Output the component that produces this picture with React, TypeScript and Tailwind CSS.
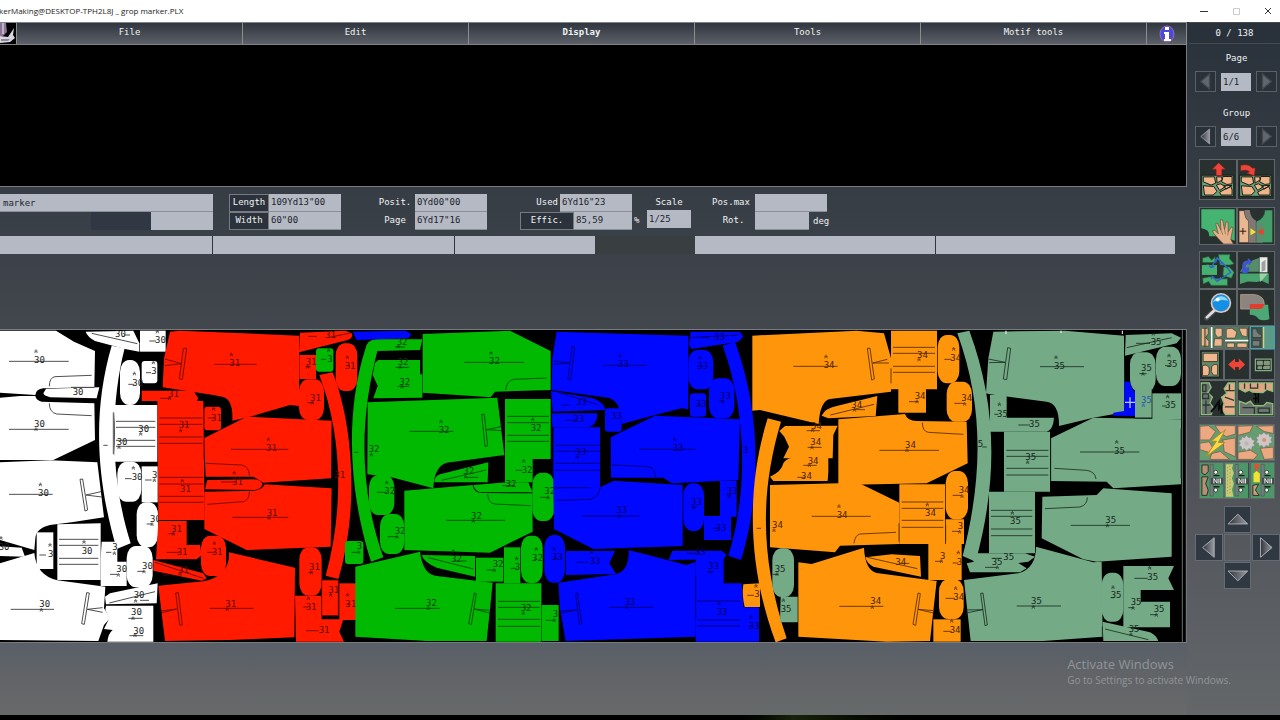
import React from 'react';

type Point = [number, number];
type Oval = [number, number, number, number];
type Label = [number, number, string?];

interface MarkerSize {
  size: string;
  offset: number;
  fill: string;
  ink: string;
  shapes: string[];
  ovals: Oval[];
  lines: string;
  labels: Label[];
  stars: Point[];
}

const stripes = (x1: number, x2: number, ys: number[]) => ys.map((y) => `M${x1} ${y}H${x2}`).join('');

// Coordinates are in thirds of a screen pixel, each size has its own origin
const sizes: MarkerSize[] = [
  {
    size: '30',
    offset: 0,
    fill: '#ffffff',
    ink: '#222222',
    shapes: [
      'M0 17H168L222 50L285 78L283 187L130 190Q108 192 106 210L0 203Z',
      'M138 191L298 187L290 220L150 217Q132 212 130 205Z',
      'M0 218L60 213H106Q108 226 125 230L283 235L285 345L160 405H0Z',
      'M0 412L150 406L292 412L312 577L215 592L150 600Q108 610 106 640L103 675L0 645Z',
      'M0 664L65 668L75 695L0 693Z',
      'M110 622H160V732H110Z',
      'M172 598L302 595V765H172Z',
      'M0 715L103 684Q108 750 172 766L316 785L312 850L330 880L312 900L295 948L0 945Z',
      'M335 62L374 70C330 240 330 460 392 655L350 672C285 450 280 250 335 62Z',
      'M257 20L400 17L418 55V80L375 72L285 48Q262 35 257 20Z',
      'M420 17H497V80H420Z',
      'M345 240H472V410H345Z',
      'M425 424H473V532H425Z',
      'M305 650H352V710H380V783H302V700Z',
      'M315 815L330 805L473 775L470 835L318 838Z',
      'M318 842H460V950H322Q325 925 338 915L312 912L328 880L316 855Z',
    ],
    ovals: [[360, 105, 420, 240], [425, 108, 472, 175], [352, 410, 424, 530], [410, 532, 474, 667], [380, 663, 458, 787]],
    lines:
      'M27 109H206M27 313H206M27 508H158M32 853H162M148 184Q148 158 165 155L275 151M148 235Q148 262 170 267L275 272M213 187H283' +
      'M340 262V388M310 361H323M240 463L248 462L263 555L255 558ZM258 510L303 500M258 510L305 516M260 803L268 804L253 898L245 896Z' +
      'M262 853L308 848M262 853L308 862M275 25L412 56M328 834L465 800M118 690H138M385 178H403M438 143H453M448 48H468M375 461H395M435 465H455' +
      'M440 597H456M318 682H334M330 748H352M412 739H432M385 880H428M388 932H430M420 826H447M372 30H390' +
      stripes(348, 466, [289, 307, 346, 364]) + stripes(177, 295, [643, 661, 700, 718]),
    labels: [[102, 114], [218, 210], [102, 306], [114, 514], [118, 846], [345, 36], [465, 54], [397, 183], [454, 147, '3'], [415, 321], [350, 360], [395, 465], [456, 460, '3'], [450, 590], [-4, 675], [144, 697, '3'], [245, 686], [337, 675, '3'], [349, 742], [426, 732], [401, 819], [393, 871], [400, 926]],
    stars: [[108, 79], [108, 313], [121, 479], [124, 855], [403, 146], [460, 113], [422, 327], [357, 367], [400, 429], [463, 466], [456, 598], [150, 660], [252, 651], [343, 685], [355, 750], [432, 740], [407, 828], [399, 880], [405, 931], [3, 639], [472, 20]],
  },
  {
    size: '31',
    offset: 0,
    fill: '#ff1a00',
    ink: '#5c0a00',
    shapes: [
      'M510 20L540 17L897 32V243L870 240L750 275L697 287Q700 225 670 216L640 210L488 187L492 100Z',
      'M900 23L1035 17Q1057 22 1057 30Q1056 42 1040 46L897 82Z',
      'M898 90H948V162H898Z',
      'M958 150L998 142C1060 300 1078 550 1015 762L977 752C1030 560 1030 340 958 150Z',
      'M425 197L580 197L595 220L590 228H425Z',
      'M472 228H610L614 585H475Z',
      'M612 340L740 275L995 287L993 460L790 473L760 455H617Z',
      'M622 465L760 463Q785 464 787 478Q785 492 765 495L615 493Z',
      'M613 500L765 497Q790 492 794 478L995 490L992 665L740 675L613 612Z',
      'M475 588H560V660H600L605 690L590 703H468Z',
      'M460 705L610 745L620 760L605 767L460 737Z',
      'M475 782L617 768Q690 750 687 682L885 728L883 937L690 945L495 948Z',
      'M965 765H1015V872H965Z',
      'M885 812H965V883H1030L1018 920L1032 950H888Z',
      'M1018 775H1068V885H1018Z',
    ],
    ovals: [[1007, 55, 1072, 198], [897, 163, 972, 285], [613, 245, 663, 316], [603, 632, 678, 753], [898, 667, 965, 812]],
    lines:
      'M550 70L560 70L547 163L538 162ZM495 102L543 116L495 122M642 118H770M693 373H865M697 577H865M630 850H760M527 804L535 803L547 900L539 900ZM483 858L530 852L483 864' +
      'M617 415L725 420Q748 425 748 452M622 538L730 530Q748 525 748 500M663 471H710M925 34H950M985 38L1050 24M480 220H510M917 125H932M922 233H942M1038 122H1050M623 279H645' +
      'M612 340V403M505 626H525M500 682H540M622 682H645M465 712L610 760M488 750H508M925 742H940M910 846H925M918 917H955M1040 838H1050M965 765H1015V872H965Z' +
      stripes(478, 607, [279, 298, 336, 355]) + stripes(478, 610, [457, 477, 514, 532]),
    labels: [[688, 123], [798, 378], [800, 573], [676, 845], [975, 38], [917, 121], [1034, 131], [930, 227], [504, 216], [633, 288], [536, 310], [540, 501], [696, 479], [513, 620], [530, 690], [635, 690], [534, 745], [927, 734], [985, 803], [917, 855], [956, 923], [1036, 847], [1003, 459]],
    stars: [[694, 89], [805, 343], [807, 580], [682, 853], [923, 126], [1042, 97], [937, 234], [641, 252], [542, 317], [547, 467], [703, 444], [643, 655], [520, 627], [934, 743], [992, 810], [925, 820], [1043, 810], [509, 220], [540, 748]],
  },
  {
    size: '32',
    offset: 1020,
    fill: '#00b900',
    ink: '#003c00',
    shapes: [
      'M75 75Q80 43 110 43H247L240 75L112 78C65 260 50 470 130 697L93 710C20 480 20 250 75 75Z',
      'M105 113L115 105H240V148H247V218L100 220L113 182L98 150Z',
      'M248 27L510 17L632 78V195L465 200L452 217L385 212L248 203Z',
      'M83 232L472 218L493 390L320 413Q282 425 280 490L155 457L82 448Z',
      'M495 222H632V402H578V472H495Z',
      'M283 472Q282 455 300 448L445 412L443 472Z',
      'M400 480L500 472H565L578 502H420Q402 495 400 480Z',
      'M193 497L398 480Q400 502 425 504L577 505L578 620L450 683L193 675Z',
      'M46 725L240 680Q248 745 285 752L458 773L440 948H260L46 935Z',
      'M245 690L405 693V755L290 728Q252 712 245 690Z',
      'M408 698H490V770H408Z',
      'M492 667H541V775H492Z',
      'M467 775H604V950H467Z',
      'M605 840H656V948H605Z',
    ],
    ovals: [[-72, 70, -20, 140], [87, 450, 163, 570], [120, 567, 193, 687], [577, 443, 643, 588], [543, 632, 608, 774], [15, 648, 70, 717]],
    lines:
      'M373 112H552M208 319H340M318 586H495M165 850H300M497 195Q500 168 520 163L620 159M443 508Q445 535 465 537L572 542M425 268L433 268L443 362L435 364Z' +
      'M440 314L483 305M440 314L485 317M403 804L409 806L394 899L386 896ZM402 852L448 856M402 852L448 864M305 466L438 435M265 698L400 732M165 66H195M167 127H208M172 184H208M110 502H140' +
      'M143 635H172M527 436H547M600 517H627M582 703H592M512 730H530M440 735H462M487 482H525M340 708H380M380 457H415M43 382H55M617 886H640M35 682H52M-57 103H-42' +
      stripes(502, 627, [274, 293, 331, 349]) + stripes(474, 599, [829, 847, 883, 904]),
    labels: [[447, 117], [296, 324], [393, 581], [258, 842], [86, 381], [170, 60], [173, 120], [178, 180], [133, 507], [164, 627], [545, 443], [572, 318], [370, 448], [497, 487], [613, 508], [576, 709], [524, 736, '3'], [458, 727], [333, 712], [542, 858], [638, 876, '3'], [50, 671, '3'], [-38, 111, '3']],
    stars: [[453, 84], [303, 290], [400, 588], [265, 850], [94, 389], [175, 65], [181, 127], [186, 185], [140, 473], [171, 636], [551, 408], [578, 284], [377, 456], [624, 518], [589, 672], [530, 701], [463, 736], [340, 679], [550, 865], [643, 886], [56, 682], [-34, 76]],
  },
  {
    size: '33',
    offset: 1620,
    fill: '#0008ff',
    ink: '#000060',
    shapes: [
      'M-562 20L-405 17Q-388 22 -387 30L-395 40L-550 45Z',
      'M50 20L445 32V253L425 250L345 270L245 297Q245 230 205 218L35 195L37 100Z',
      'M452 20L600 20L610 35L595 50L455 72L447 60Z',
      'M548 62L585 50C660 250 668 500 603 705L565 692C625 500 620 260 548 62Z',
      'M33 198L160 220Q195 235 195 255L38 260Z',
      'M35 265H172Q172 300 145 307H37Z',
      'M40 307H180V490H40Z',
      'M212 337L345 272L600 283L595 465L395 475L370 458H213Z',
      'M40 490L180 487L222 467L428 480V663L160 672L42 612Z',
      'M540 467H590V575H573V645H492V573H540Z',
      'M78 678H225L208 715L228 747L78 750Z',
      'M55 773L230 747Q268 735 266 675L440 720L467 710V935L77 948L60 850Z',
      'M397 677H545L560 690L550 703L386 705Z',
      'M467 700H551V775H605L610 847H657V950H467Z',
    ],
    ovals: [[445, 75, 520, 193], [507, 160, 583, 280], [450, 205, 498, 275], [195, 250, 245, 320], [430, 475, 492, 618], [13, 630, 75, 773]],
    lines:
      'M190 121H320M298 373H467M125 573H298M208 847H340M96 64L104 66L92 165L84 163ZM42 108L88 114L42 118M107 806L113 804L125 898L118 898ZM62 858L110 855L65 864' +
      'M217 420L325 425Q346 430 346 455M50 526L150 523Q178 515 180 488M50 200L175 240M65 240H88M75 286H110M445 38L595 30M485 38H505M473 123H490M470 240H485M536 228H552M45 488H148' +
      'M110 712H145M455 545H470M560 510H575M520 610H540M40 700H55M440 685H480M500 740H520M625 905H640M467 755V880' +
      stripes(47, 178, [361, 379, 415, 436]) + stripes(472, 600, [828, 885, 903]),
    labels: [[234, 126], [398, 378], [229, 564], [254, 840], [108, 241], [100, 290], [213, 283], [106, 389], [522, 45], [472, 132], [540, 223], [467, 247], [609, 383, '3'], [453, 541], [560, 507], [527, 617], [36, 704], [149, 717], [465, 690], [505, 733], [530, 870], [626, 912]],
    stars: [[240, 92], [404, 344], [238, 574], [261, 848], [480, 98], [548, 230], [112, 396], [461, 548], [568, 515], [42, 672], [155, 682], [511, 741], [537, 835], [633, 877]],
  },
  {
    size: '34',
    offset: 2220,
    fill: '#ff950a',
    ink: '#4a2400',
    shapes: [
      'M10 778L60 775V846H14Q5 810 10 778Z',
      'M37 32L350 17L432 25L453 100V200L270 222Q240 228 236 297L60 255L37 257Z',
      'M453 17H591V193H558V263H475V193H453Z',
      'M245 272Q255 250 290 243L412 213L407 273L265 280Z',
      'M295 283L495 267Q502 288 530 288L680 290L683 415L560 475L295 480Z',
      'M118 318L135 303L293 302L280 330L278 400H265V440L263 468H100L90 455Q125 440 130 415Q140 400 155 400H130L147 365L133 335Z',
      'M83 280L123 290C60 500 60 700 140 940L107 952C20 720 20 480 83 280Z',
      'M90 480L355 473L478 533V657L300 662L285 682L90 667Z',
      'M478 478H615V657H478Z',
      'M617 583H672V657H665V765H565V657H617Z',
      'M175 712L215 717L372 668Q375 735 410 744L590 768L570 948L440 950L175 935Z',
      'M376 697L455 688L540 693L543 755L400 725Q380 715 376 697Z',
      'M580 883H662V950H580Z',
    ],
    ovals: [[593, 30, 658, 175], [620, 170, 696, 290], [617, 438, 684, 583], [597, 763, 671, 882]],
    lines:
      'M160 124H293M418 376H597M215 574H392M298 844H430M382 70L390 70L403 162L395 165ZM398 114L442 103M398 114L447 114M534 804L541 806L527 901L519 898ZM534 853L580 857M534 853L580 864' +
      'M547 293Q548 320 565 322L670 328M342 655Q345 630 360 627L468 622M271 270L402 238M382 697L532 731M343 254H375M200 317H240M203 367H245M190 421H230M172 457H195M613 103H635M507 230H535' +
      'M643 235H672M638 511H665M636 619H658M585 709H605M638 714H655M617 820H645M610 919H635M50 610H63M22 811H42M478 715H508M453 130V175M477 595V650M617 600V650' +
      stripes(459, 585, [67, 85, 124, 142]) + stripes(485, 610, [531, 550, 586, 607]),
    labels: [[251, 129], [495, 370], [290, 579], [391, 837], [334, 249], [531, 98], [631, 108], [524, 221], [664, 228], [213, 311], [211, 361], [203, 416], [183, 462], [96, 610], [555, 574], [656, 505], [653, 612, '3'], [600, 703, '3'], [650, 720, '3'], [466, 719], [640, 826], [629, 925], [43, 817, '3']],
    stars: [[258, 95], [501, 376], [297, 544], [397, 847], [343, 255], [537, 104], [641, 72], [531, 230], [674, 237], [218, 316], [216, 368], [208, 421], [102, 616], [562, 539], [666, 514], [659, 621], [604, 709], [655, 683], [647, 790], [635, 888], [48, 783]],
  },
  {
    size: '35',
    offset: 2850,
    fill: '#74aa86',
    ink: '#16281c',
    shapes: [
      'M22 25L58 17C140 240 145 460 77 710L38 693C100 450 100 240 22 25Z',
      'M-508 815H-457V892H-510Z',
      'M130 20L345 17L522 32L523 262L430 278L327 303Q328 235 290 230L120 208L108 205L115 100Z',
      'M120 210H170V278H312Q310 315 290 320H120Z',
      'M162 320H300V500H162Z',
      'M117 500H255V685H117Z',
      'M303 340L430 278L693 283V478L490 490L470 470L303 468Z',
      'M277 515L440 510L460 490L665 505V695L440 710L400 703L275 640Z',
      'M42 765L205 745Q258 730 258 665L430 712L455 710L458 935L280 948H62Z',
      'M50 685H225L255 695L235 710L205 714L230 730L210 742H60L50 715L72 710Z',
      'M527 30L665 25L693 38L680 55L525 92Z',
      'M555 195H605V278H555Z',
      'M607 205H693V282H607Z',
      'M520 723H672L655 760L672 795H572V830H660V907H520Z',
      'M458 890L600 922Q620 932 625 948H460Z',
    ],
    ovals: [[540, 82, 617, 200], [618, 65, 693, 183], [455, 743, 520, 890], [-533, 670, -468, 816]],
    lines:
      'M270 125H402M390 381H568M362 601H540M200 843H333M173 68L182 70L170 164L160 162ZM115 102L165 112L117 113M92 805L99 804L112 900L105 902ZM48 855L98 854M48 864L98 854' +
      'M313 430L410 436Q436 440 438 462M285 551L390 546Q412 540 412 517M530 68L665 38M558 55H600M465 912L595 944M97 366H110M205 300H240M133 268H145M125 700H155M105 727H140M568 146H590' +
      'M645 122H660M636 243H650M553 760H593M535 848H550M600 869H620M482 818H492M555 280H605M-532 748H-515M302 340V468M693 310V460M457 905V935' +
      stripes(169, 295, [376, 394, 430, 450]) + stripes(123, 247, [556, 574, 612, 632]),
    labels: [[312, 131], [492, 386], [466, 595], [243, 836], [83, 366, '5'], [237, 305], [141, 275], [226, 405], [180, 598], [160, 706], [125, 721], [602, 60], [573, 138], [650, 126], [645, 249], [592, 764], [542, 840], [611, 861], [482, 819], [536, 920], [-526, 740], [-508, 860]],
    stars: [[318, 97], [500, 351], [472, 602], [250, 846], [148, 238], [233, 412], [187, 564], [579, 147], [657, 92], [653, 215], [599, 729], [549, 849], [619, 870], [489, 787], [543, 928], [142, 728], [610, 27], [-519, 748], [-500, 826]],
  },
];

const starPath = ([x, y]: Point) => `M${x} ${y - 6}V${y - 2}M${x - 5} ${y - 1}H${x + 5}M${x - 4} ${y + 5}L${x - 1} ${y}M${x + 4} ${y + 5}L${x + 1} ${y}`;

const Marker: React.FC = () => (
  <svg viewBox="0 15 3561 936" className="block w-full bg-black" role="img" aria-label="Marker layout">
    {sizes.map((s) => (
      <g key={s.size} transform={`translate(${s.offset} 0)`}>
        <g fill={s.fill}>
          {s.shapes.map((d) => (
            <path key={d} d={d} />
          ))}
          {s.ovals.map(([x1, y1, x2, y2]) => (
            <rect key={`${x1}-${y1}`} x={x1} y={y1} width={x2 - x1} height={y2 - y1} rx={y2 - y1 < 80 ? 9 : 27} ry={y2 - y1 < 80 ? 9 : 36} />
          ))}
        </g>
        <path d={s.lines} fill="none" stroke={s.ink} strokeWidth="2.4" />
        <path d={s.stars.map(starPath).join('')} fill="none" stroke={s.ink} strokeWidth="2" />
        <g fill={s.ink} fontSize="27" fontFamily="'DejaVu Sans Mono', monospace">
          {s.labels.map(([x, y, text]) => (
            <text key={`${x}-${y}`} x={x} y={y}>
              {text ?? s.size}
            </text>
          ))}
        </g>
      </g>
    ))}
    <g transform="translate(2850 0)">
      <path d="M523 170H540Q545 195 555 200V273L490 272V263L523 258Z" fill="#0008ff" />
      <text x="573" y="234" fill="#1f56b0" fontSize="27" fontFamily="'DejaVu Sans Mono', monospace">35</text>
      <path d={starPath([580, 241])} stroke="#1f56b0" strokeWidth="2" />
      <path d="M525 232H555M540 217V249" stroke="#b9c6ee" strokeWidth="4" />
      <path d="M168 17V27M333 17V24M517 17V27" stroke="#fff" strokeWidth="3" />
      <path d="M697 15V951" stroke="#66706a" strokeWidth="3" />
      <path d="M709 15V951" stroke="#8a8d90" strokeWidth="3" />
    </g>
  </svg>
);

const menus = ['File', 'Edit', 'Display', 'Tools', 'Motif tools'];

const MenuBar: React.FC = () => (
  <nav className="flex h-[23px] border-y border-[#808285] bg-linear-to-b from-[#30363f] to-[#5d6068]">
    <svg viewBox="0 0 16 21" className="h-full w-4 shrink-0 bg-black" aria-hidden="true">
      <path d="M0 0H6L7 9L3 13H0Z" fill="#8b7596" />
      <path d="M2 0H4V11H2Z" fill="#c3b3ca" />
      <path d="M0 13L8 14L14 5L13 12L15 15L10 19L0 20Z" fill="#d8d5de" />
      <path d="M1 16H10L8 18H1Z" fill="#8d8799" />
    </svg>
    {menus.map((name) => (
      <button
        key={name}
        type="button"
        className={`flex-1 border-l border-[#8c8e8c] pb-0.5 text-center ${name === 'Display' ? 'font-bold' : ''}`}
      >
        {name}
      </button>
    ))}
    <button type="button" aria-label="Information" className="flex w-[41px] items-center justify-center border-x border-[#8c8e8c]">
      <svg viewBox="0 0 18 18" className="size-[18px]">
        <ellipse cx="9" cy="9" rx="7" ry="8" fill="#4a49d8" stroke="#9a6ab8" />
        <path d="M7 2H11V5H7ZM6 7H11V14H13V16H6V14H7V9H6Z" fill="#fff" />
      </svg>
    </button>
  </nav>
);

interface FieldProps {
  id: string;
  label: string;
  value?: string;
  labelClass?: string;
  inputClass?: string;
}

const Field: React.FC<FieldProps> = ({ id, label, value = '', labelClass = '', inputClass = 'w-[72px]' }) => (
  <div className="flex h-[18px] justify-end">
    <label htmlFor={id} className={`flex items-center ${labelClass}`}>
      {label}
    </label>
    <input id={id} defaultValue={value} className={`border-b border-[#8b9098] bg-[#b5b9c4] px-0.5 text-[#20252c] ${inputClass}`} />
  </div>
);

const InfoPanel: React.FC = () => (
  <section className="h-[142px] pt-[7px]">
    <div className="flex">
      <div className="w-[213px]">
        <input aria-label="Marker name" defaultValue="marker" className="block h-[18px] w-full border-b border-[#8b9098] bg-[#b5b9c4] px-[3px] text-[#20252c]" />
        <div className="flex h-[18px] justify-end">
          <div className="w-[60px] bg-[#2f3843]" />
          <input aria-label="Variant" className="w-[62px] bg-[#b5b9c4] px-0.5" />
        </div>
      </div>
      <div className="ml-4">
        <Field id="length" label="Length" value={'109Yd13"00'} labelClass="w-10 justify-center border border-[#767b80] bg-[#2b323b]" />
        <Field id="width" label="Width" value={'60"00'} labelClass="w-10 justify-center border border-[#767b80] bg-[#2b323b]" />
      </div>
      <div className="ml-[34px]">
        <Field id="posit" label="Posit." value={'0Yd00"00'} labelClass="w-10 justify-center" />
        <Field id="page-length" label="Page" value={'6Yd17"16'} labelClass="w-10 justify-center" />
      </div>
      <div className="ml-[33px]">
        <Field id="used" label="Used" value={'6Yd16"23'} labelClass="pr-0.5" />
        <Field id="effic" label="Effic." value="85,59" labelClass="w-[54px] justify-center border border-[#767b80] bg-[#2b323b]" inputClass="w-[58px]" />
      </div>
      <span className="mt-5 ml-0.5 w-[13px]">%</span>
      <div className="w-11">
        <label htmlFor="scale" className="block h-4 text-center leading-4">Scale</label>
        <input id="scale" defaultValue="1/25" className="block h-[18px] w-full bg-[#b5b9c4] px-0.5 text-[#20252c]" />
      </div>
      <div className="ml-[21px] flex flex-col items-start">
        <Field id="pos-max" label="Pos.max" labelClass="w-[43px]" />
        <div className="flex">
          <Field id="rotation" label="Rot." labelClass="w-[43px] justify-center" inputClass="w-[54px]" />
          <span className="ml-1 leading-[18px]">deg</span>
        </div>
      </div>
    </div>
    <div className="mt-1.5 flex h-[18px] pr-3">
      <input aria-label="Message 1" className="min-w-0 flex-[213_1_0%] border-r border-[#30363d] bg-[#b5b9c4]" />
      <input aria-label="Message 2" className="min-w-0 flex-[241_1_0%] border-r border-[#30363d] bg-[#b5b9c4]" />
      <input aria-label="Message 3" className="min-w-0 flex-[141_1_0%] bg-[#b5b9c4]" />
      <div className="flex-[100_1_0%] bg-[#393e41]" />
      <input aria-label="Message 4" className="min-w-0 flex-[240_1_0%] border-r border-[#30363d] bg-[#b5b9c4]" />
      <input aria-label="Message 5" className="min-w-0 flex-[240_1_0%] bg-[#b5b9c4]" />
    </div>
  </section>
);

const arrows = {
  left: 'M20 3L7 14L20 25Z',
  right: 'M8 3L21 14L8 25Z',
  up: 'M14 8L25 19H3Z',
  down: 'M14 20L25 9H3Z',
};

const Arrow: React.FC<{ to: keyof typeof arrows; off?: boolean }> = ({ to, off }) => (
  <svg viewBox="0 0 28 28" className="size-full">
    <path d={arrows[to]} fill={off ? '#62666e' : 'url(#metal)'} stroke={off ? '#454a52' : '#b4b7bd'} strokeWidth={off ? 2 : 1} />
  </svg>
);

const Pager: React.FC<{ id: string; label: string; value: string; prevOff?: boolean }> = ({ id, label, value, prevOff }) => (
  <div className="mb-2.5">
    <label htmlFor={id} className="block h-[22px] pr-0.5 text-center leading-[22px]">{label}</label>
    <div className="mt-0.5 flex h-[21px] items-center gap-[5px]">
      <button type="button" aria-label={`Previous ${label}`} className="size-[21px] border border-[#596067] bg-[#2a3139]">
        <Arrow to="left" off={prevOff} />
      </button>
      <input id={id} defaultValue={value} className="h-[18px] w-[30px] bg-[#b5b9c4] px-0.5 text-[#20252c]" />
      <button type="button" aria-label={`Next ${label}`} className="size-[21px] border border-[#596067] bg-[#2a3139]">
        <Arrow to="right" off />
      </button>
    </div>
  </div>
);

interface ToolProps {
  label: string;
  viewBox: string;
  active?: boolean;
  children: React.ReactNode;
}

const Tool: React.FC<ToolProps> = ({ label, viewBox, active, children }) => (
  <button type="button" aria-label={label} className={`min-w-0 flex-1 overflow-hidden border bg-[#28312f] ${active ? 'border-[#38a7b5]' : 'border-[#5f6569]'}`}>
    <svg viewBox={viewBox} preserveAspectRatio="none" className="block size-full">
      {children}
    </svg>
  </button>
);

const Cuttings: React.FC = () => (
  <g stroke="#171c18" strokeWidth="3">
    <path d="M5 46H103V110H5Z" fill="#68a178" />
    <path d="M10 51H44L48 70L34 76L10 66ZM51 51H66L68 60L52 70ZM70 50H98V72L82 74L66 66ZM10 78L42 80L52 95L40 106H14ZM50 76L62 72L78 80L60 92ZM60 97L94 80L98 90V106H64ZM72 78L98 77L80 88Z" fill="#f0b488" />
  </g>
);

const Clamp: React.FC = () => (
  <g>
    <path d="M32 4H42V100H32Z" fill="#777d80" stroke="#2c3230" />
    <path d="M36 46H72V64H36Z" fill="#4b5152" stroke="#111" />
    <path d="M44 62V47L54 61V47M60 47V62M65 47V62" fill="none" stroke="#e8eae8" strokeWidth="3" />
    <circle cx="50" cy="28" r="6" fill="#f2f4f0" stroke="#111" strokeWidth="2" />
    <circle cx="50" cy="82" r="6" fill="#f2f4f0" stroke="#111" strokeWidth="2" />
    <path d="M43 38H62M43 72H62" stroke="#182018" strokeWidth="4" />
  </g>
);

const gear = 'M22 0L29 7L37 4L39 13L48 16L43 24L48 32L39 35L38 44L29 41L22 48L16 41L7 44L6 35L-2 32L3 24L-2 16L6 13L7 4L16 7Z';

const Toolbox: React.FC = () => (
  <div className="ml-1 w-[76px]">
    <div className="mb-[7px] flex h-[41px]">
      <Tool label="Remove pieces" viewBox="0 0 110 118">
        <Cuttings />
        <path d="M57 8L78 28H67V47H49V28H37Z" fill="#ea443b" stroke="#7c1f1c" strokeWidth="2" />
      </Tool>
      <Tool label="Move pieces" viewBox="0 0 110 118">
        <Cuttings />
        <path d="M8 16Q32 10 43 24L53 25L50 48L27 40L35 35Q26 28 8 33Z" fill="#ea443b" stroke="#7c1f1c" strokeWidth="2" />
      </Tool>
    </div>
    <div className="mb-1.5 flex h-[38px]">
      <Tool label="Grab piece" viewBox="0 0 110 110">
        <path d="M4 4H106V100L70 86H28Q30 66 4 62Z" fill="#45b471" />
        <path d="M62 100L42 78L38 70L45 68L56 79L48 48L53 46L64 68L62 36L69 36L75 66L80 42L86 43L86 73L96 58L101 60L94 96L102 110H72Z" fill="#e2b18b" stroke="#6b452f" strokeWidth="2" />
        <path d="M64 68L70 82M75 66L78 80M86 73L85 84" stroke="#8d6044" strokeWidth="2" />
      </Tool>
      <Tool label="Align piece" viewBox="0 0 110 110">
        <path d="M3 8H20Q20 32 33 40V106H3Z" fill="#eab890" stroke="#231d1a" strokeWidth="2" />
        <path d="M20 6H36Q38 30 56 40V106H33V40Q20 30 20 6Z" fill="#817874" />
        <path d="M56 40Q80 34 82 6H106V106H56Z" fill="#459e69" stroke="#20352a" strokeWidth="2" />
        <path d="M56 44H76V106H56Z" fill="#5f8c70" />
        <path d="M5 71H25M15 61V81" stroke="#2d1b16" strokeWidth="3" />
        <path d="M38 62L55 73L38 83Z" fill="#f0e432" />
        <path d="M78 62L58 73L78 83Z" fill="#e8412c" />
      </Tool>
    </div>
    <div className="flex h-[38px]">
      <Tool label="Rotate group" viewBox="0 0 110 110">
        <path d="M8 18L26 14L36 25L46 14V32H8ZM56 8H92L90 20L104 36L92 40H62ZM6 42L26 38L30 50L48 42V68H6ZM72 46H90L104 62L96 80L70 72ZM8 80L30 76L50 82L84 82V102H34L26 90L10 98Z" fill="#47b06f" stroke="#255f3d" strokeWidth="2" />
        <path d="M6 40H52V70H6Z" fill="#47b06f" />
        <path d="M34 48L52 18L72 36L94 62L52 90L38 74M34 48L28 42M34 48L44 44M52 18L48 32M72 36L60 34M94 62L84 50M52 90L64 78M38 74L34 84" fill="none" stroke="#3267c8" strokeWidth="4" />
      </Tool>
      <Tool label="Flip piece" viewBox="0 0 110 110">
        <path d="M6 60Q20 30 64 18V60Z" fill="#548d69" />
        <path d="M6 66H94V98L72 88L58 92L30 90L6 98Z" fill="#48a36c" />
        <path d="M66 16H90V62H66Z" fill="#e9ece9" />
        <path d="M72 32L84 24V56L72 60Z" fill="#9da39f" />
        <path d="M66 66H92L68 92Z" fill="#9bd0a8" />
        <path d="M14 54Q8 26 30 26L30 18L44 30L32 42V35Q22 36 24 48L34 46V56Q30 66 20 66L8 60Z" fill="#3e55cf" />
      </Tool>
    </div>
    <div className="flex h-[37px]">
      <Tool label="Zoom" viewBox="0 0 110 110">
        <path d="M48 60L20 88" stroke="#51545a" strokeWidth="15" strokeLinecap="round" />
        <path d="M46 62L21 86" stroke="#dfdce5" strokeWidth="8" strokeLinecap="round" />
        <circle cx="64" cy="41" r="29" fill="#1390e6" stroke="#e5c5b6" strokeWidth="5" />
        <path d="M40 38Q48 20 66 20Q80 22 86 34Q62 28 40 38Z" fill="#8bd8ff" />
        <circle cx="54" cy="30" r="6" fill="#fff" />
      </Tool>
      <Tool label="Overlap" viewBox="0 0 110 110">
        <path d="M8 14H50Q78 18 80 40V60H8Z" fill="#8b8582" stroke="#d8a78a" strokeWidth="2" />
        <path d="M36 46H92L96 92Q76 98 64 92Q54 78 36 78Z" fill="#4ca875" />
        <path d="M36 44H80Q80 56 68 60H36Z" fill="#e33c2e" />
      </Tool>
    </div>
    <div className="flex h-[23px]">
      <Tool label="Vertical split" viewBox="0 0 74 68">
        <path d="M0 0H74V68H0Z" fill="#527f5f" />
        <path d="M4 4H26V22L18 34L28 46V62H4ZM48 4H70V30L56 34L48 22ZM46 38H70V62H44ZM14 4H18V64H14Z" fill="#edb68f" stroke="#2f3329" strokeWidth="2" />
        <path d="M37 0V68" stroke="#fff" strokeWidth="5" />
      </Tool>
      <Tool label="Horizontal split" viewBox="0 0 74 68">
        <path d="M0 0H74V68H0Z" fill="#527f5f" />
        <path d="M4 6L22 4L38 16L32 36H4ZM44 4H70V32L54 28ZM6 52H30V66H6ZM38 52H70V66H38Z" fill="#edb68f" stroke="#2f3329" strokeWidth="2" />
        <path d="M0 44H74" stroke="#fff" strokeWidth="5" />
      </Tool>
      <Tool label="Lock zone" viewBox="0 0 74 68" active>
        <path d="M0 0H74V68H0Z" fill="#5b9a86" />
        <path d="M0 0H36V68H0Z" fill="#45504c" />
        <path d="M4 6H18Q18 22 34 26V34H4ZM4 44H28V62H4Z" fill="#747d78" stroke="#252d2a" strokeWidth="2" />
        <path d="M40 0V68" stroke="#d4cf70" strokeWidth="4" />
      </Tool>
    </div>
    <div className="flex h-[31px]">
      <Tool label="Show pieces" viewBox="0 0 74 90">
        <path d="M4 4H62V84H4Z" fill="#5a8c67" stroke="#17201a" strokeWidth="3" />
        <path d="M10 10H56V36H10ZM8 48Q28 42 30 62Q30 78 24 80H8ZM37 52Q43 42 56 46V78H42Q32 68 37 52Z" fill="#eeb78e" stroke="#4a392e" strokeWidth="3" />
      </Tool>
      <Tool label="Swap" viewBox="0 0 74 90">
        <path d="M10 45L32 26V37H44V26L64 45L44 64V53H32V64Z" fill="#ee4438" />
      </Tool>
      <Tool label="Fit marker" viewBox="0 0 74 90">
        <path d="M14 28H64V64H14Z" fill="#1e2722" stroke="#82ab88" strokeWidth="4" />
        <path d="M20 35H36V46H20ZM42 35H58V46H42ZM22 52H34V58H22ZM40 52L58 50V58H40Z" fill="#9a8d78" stroke="#80a989" strokeWidth="3" />
      </Tool>
    </div>
    <div className="mb-[7px] flex h-[37px]">
      <Tool label="Compact horizontally" viewBox="0 0 110 108">
        <path d="M4 6H28L34 20L24 36L38 50L30 68L42 84L34 104H4Z" fill="#6e7570" stroke="#8fbd7c" strokeWidth="4" />
        <path d="M106 6H86L74 24L82 38L66 50L74 70L66 84L78 104H106Z" fill="#e3ad87" stroke="#8fbd7c" strokeWidth="4" />
        <path d="M8 12H18V32H8ZM8 40H26V54H8ZM8 74H32M18 60V102M78 30H106M76 50L104 60M76 80H106M90 10V30" fill="none" stroke="#263a2d" strokeWidth="4" />
        <path d="M34 96L58 64V86L66 76V100" fill="none" stroke="#080a09" strokeWidth="6" />
      </Tool>
      <Tool label="Compact vertically" viewBox="0 0 110 108">
        <path d="M4 6H106V32L88 26L76 36L44 34L34 28L22 34L4 24Z" fill="#dba783" stroke="#8fbd7c" strokeWidth="4" />
        <path d="M4 104V62L24 70L38 62L48 76L78 76L88 66L106 70V104Z" fill="#6d756f" stroke="#8fbd7c" strokeWidth="4" />
        <path d="M20 8V24M38 8V22H60V8M84 8V26M14 82H50V102M62 84H96V98H62Z" fill="none" stroke="#25382c" strokeWidth="4" />
        <path d="M48 40H54V68M46 54H60M62 38V66" fill="none" stroke="#080a09" strokeWidth="5" />
      </Tool>
    </div>
    <div className="mb-px flex h-[37px]">
      <Tool label="Quick nesting" viewBox="0 0 110 108">
        <path d="M0 0H110V108H0Z" fill="#639d70" />
        <path d="M0 4L26 2L48 20L30 46H0ZM46 2H108V28L80 36L60 22ZM0 56L28 52L40 72L26 84L0 76ZM70 46L108 40V98L74 82ZM36 88L62 82L90 106H30Z" fill="#eca981" stroke="#71513e" strokeWidth="2" />
        <path d="M78 14L34 50H50L18 98L76 54H56Z" fill="#f6d94a" stroke="#b88624" strokeWidth="3" />
      </Tool>
      <Tool label="Nesting settings" viewBox="0 0 110 108">
        <path d="M0 0H110V108H0Z" fill="#639d70" />
        <path d="M0 4L46 2L36 22L0 32ZM56 4L108 2V26L80 20ZM0 84L38 78L60 92L48 106H0ZM68 72L108 68V104L80 106Z" fill="#eca981" stroke="#71513e" strokeWidth="2" />
        <path d={gear} transform="translate(4 32)" fill="#cbc7c7" stroke="#88817f" strokeWidth="2" />
        <path d={gear} transform="translate(57 22)" fill="#cbc7c7" stroke="#88817f" strokeWidth="2" />
        <circle cx="26" cy="57" r="7" fill="#bdb6b4" />
        <circle cx="80" cy="46" r="6" fill="#d98f6e" />
      </Tool>
    </div>
    <div className="mb-[7px] flex h-[37px]">
      <Tool label="Cut order" viewBox="0 0 74 106">
        <path d="M0 0H74V106H0Z" fill="#4c9668" />
        <path d="M6 6H26V26L16 36L6 30ZM6 42H26L18 62L26 82L22 98H6Z" fill="#b68f75" stroke="#2b2f27" strokeWidth="3" />
        <Clamp />
      </Tool>
      <Tool label="Fabric order" viewBox="0 0 74 106">
        <path d="M0 0H74V106H0Z" fill="#4c9668" />
        <path d="M3 4H26L22 16L28 30L22 46L28 62L22 80L27 102H3Z" fill="#c9ca76" />
        <path d="M8 12V94M16 8V98" stroke="#9ca052" strokeWidth="3" strokeDasharray="4 6" />
        <Clamp />
      </Tool>
      <Tool label="Paint order" viewBox="0 0 74 106">
        <path d="M0 0H74V106H0Z" fill="#4c9668" />
        <path d="M10 3H28L20 24L14 24Z" fill="#e0512f" />
        <path d="M8 32L18 24L28 32V58H8Z" fill="#f2e130" />
        <path d="M6 68L24 64L14 82L26 98H6Z" fill="#d69c79" stroke="#2b2f27" strokeWidth="3" />
        <Clamp />
      </Tool>
    </div>
  </div>
);

const Sidebar: React.FC = () => (
  <aside className="w-[93px] shrink-0">
    <div className="ml-0.5 h-[22px] border-y border-[#454b50] bg-[#29313b] text-center leading-5">0 / 138</div>
    <div className="pt-[3px] pl-2">
      <Pager id="page" label="Page" value="1/1" prevOff />
      <Pager id="group" label="Group" value="6/6" />
      <div className="h-0.5" />
      <Toolbox />
      <div className="grid w-[85px] grid-cols-3 gap-px">
        <button type="button" aria-label="Pan up" className="col-start-2 h-[27px] border border-[#646b75] bg-[#303842]"><Arrow to="up" /></button>
        <button type="button" aria-label="Pan left" className="col-start-1 h-[27px] border border-[#646b75] bg-[#303842]"><Arrow to="left" /></button>
        <div className="h-[27px] border border-[#646b75]" />
        <button type="button" aria-label="Pan right" className="h-[27px] border border-[#646b75] bg-[#303842]"><Arrow to="right" /></button>
        <button type="button" aria-label="Pan down" className="col-start-2 h-[27px] border border-[#646b75] bg-[#303842]"><Arrow to="down" /></button>
      </div>
    </div>
  </aside>
);

const TitleBar: React.FC = () => (
  <header className="flex h-[22px] items-center justify-between bg-white font-['Open_Sans',sans-serif] text-[8px] text-[#222]">
    <h1 className="-ml-px whitespace-nowrap">kerMaking@DESKTOP-TPH2L8J _ grop marker.PLX</h1>
    <div className="flex gap-5 pr-1.5">
      <button type="button" aria-label="Minimize">
        <svg viewBox="0 0 12 12" className="size-3"><path d="M2 6.5H10" stroke="#333" /></svg>
      </button>
      <button type="button" aria-label="Maximize">
        <svg viewBox="0 0 12 12" className="size-3"><path d="M3.5 3.5H9.5V9.5H3.5Z" fill="none" stroke="#ccc" /></svg>
      </button>
      <button type="button" aria-label="Close">
        <svg viewBox="0 0 12 12" className="size-3"><path d="M3 3L9 9M9 3L3 9" stroke="#333" /></svg>
      </button>
    </div>
  </header>
);

const App: React.FC = () => {
  return (
    <div className="relative flex min-h-screen flex-col overflow-hidden bg-black font-['DejaVu_Sans_Mono',monospace] text-[9px] text-[#f0f2f4]">
      <svg className="absolute size-0" aria-hidden="true">
        <linearGradient id="metal">
          <stop offset="0" stopColor="#30343b" />
          <stop offset="1" stopColor="#989ba1" />
        </linearGradient>
      </svg>
      <TitleBar />
      <div className="flex flex-1 bg-linear-to-b from-[#29313a] via-[#40454c] via-40% to-[#64676a]">
        <main className="flex min-w-0 flex-1 flex-col">
          <MenuBar />
          <div className="h-[142px] border-r border-b border-[#777b7e] bg-black" />
          <InfoPanel />
          <div className="border-y border-[#777b7e]">
            <Marker />
          </div>
          <footer className="flex-1 bg-linear-to-b from-[#595f68] via-[#626467] to-[#676a6b]" />
        </main>
        <Sidebar />
      </div>
      <div className="h-[5px] bg-linear-to-r from-black from-56% via-[#18220a] via-62% to-black to-75%" />
      <div className="pointer-events-none absolute right-[49px] bottom-8 font-['Open_Sans',sans-serif] text-[#8f959a]">
        <p className="text-[13px] leading-4">Activate Windows</p>
        <p className="text-[10px] leading-4">Go to Settings to activate Windows.</p>
      </div>
    </div>
  );
};

export default App;
